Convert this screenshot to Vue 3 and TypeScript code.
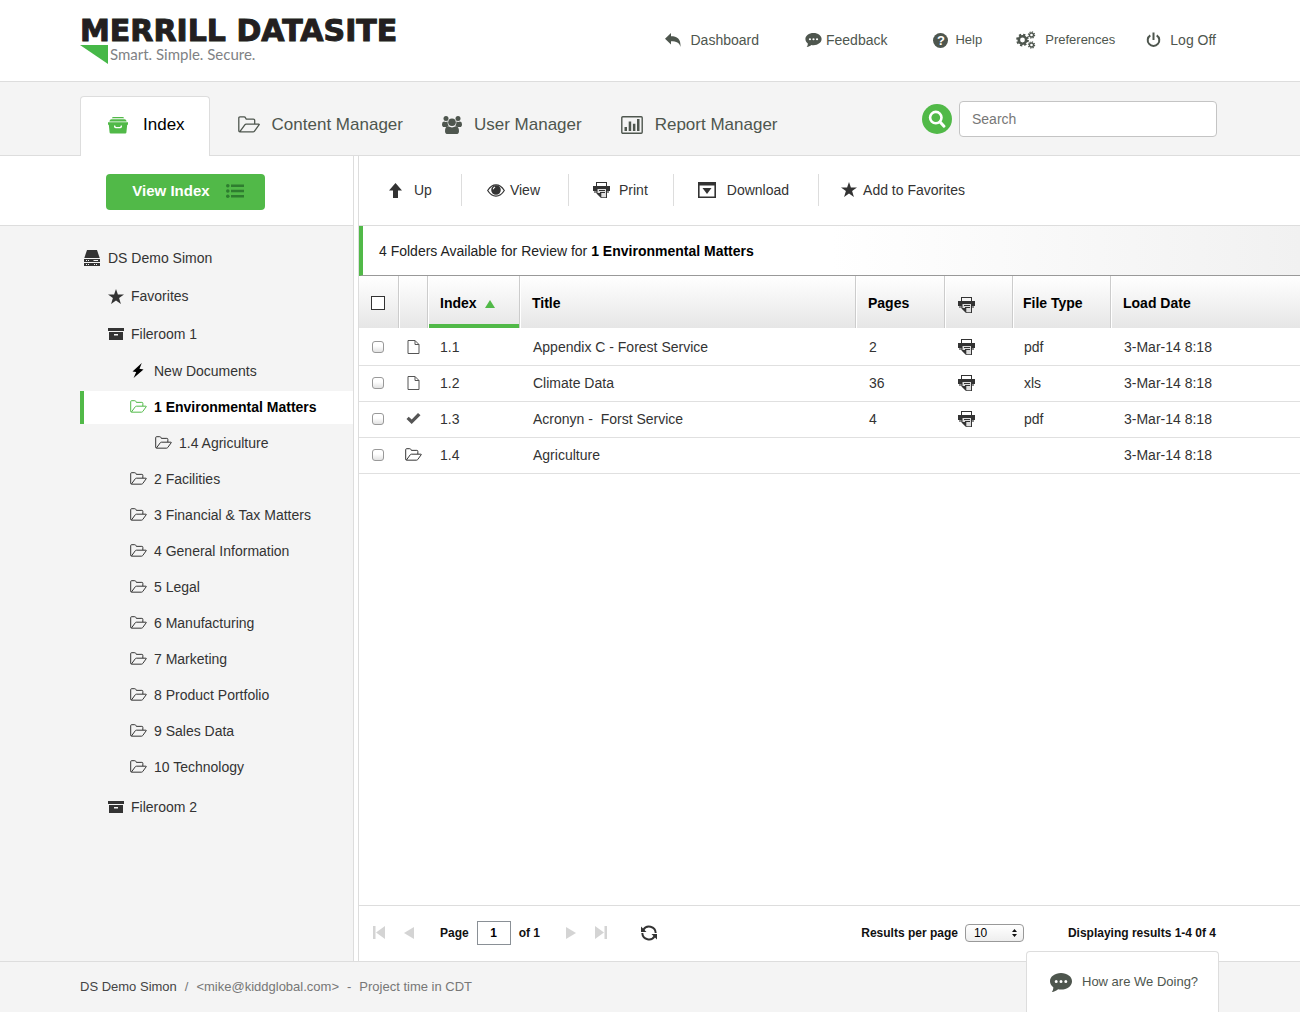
<script setup lang="ts">
import { ref } from 'vue'

interface TreeItem {
  label: string
  icon: string
  level: number
  active?: boolean
  last?: boolean
}

interface FileRow {
  icon: string
  index: string
  title: string
  pages: string
  type: string
  date: string
}

const tree: TreeItem[] = [
  { label: 'DS Demo Simon', icon: 'server', level: 0 },
  { label: 'Favorites', icon: 'star', level: 1 },
  { label: 'Fileroom 1', icon: 'box', level: 1 },
  { label: 'New Documents', icon: 'bolt', level: 2 },
  { label: '1 Environmental Matters', icon: 'folder', level: 2, active: true },
  { label: '1.4 Agriculture', icon: 'folder', level: 3 },
  { label: '2 Facilities', icon: 'folder', level: 2 },
  { label: '3 Financial & Tax Matters', icon: 'folder', level: 2 },
  { label: '4 General Information', icon: 'folder', level: 2 },
  { label: '5 Legal', icon: 'folder', level: 2 },
  { label: '6 Manufacturing', icon: 'folder', level: 2 },
  { label: '7 Marketing', icon: 'folder', level: 2 },
  { label: '8 Product Portfolio', icon: 'folder', level: 2 },
  { label: '9 Sales Data', icon: 'folder', level: 2 },
  { label: '10 Technology', icon: 'folder', level: 2, last: true },
  { label: 'Fileroom 2', icon: 'box', level: 1 },
]

const rows: FileRow[] = [
  { icon: 'page', index: '1.1', title: 'Appendix C - Forest Service', pages: '2', type: 'pdf', date: '3-Mar-14 8:18' },
  { icon: 'page', index: '1.2', title: 'Climate Data', pages: '36', type: 'xls', date: '3-Mar-14 8:18' },
  { icon: 'check', index: '1.3', title: 'Acronyn -  Forst Service', pages: '4', type: 'pdf', date: '3-Mar-14 8:18' },
  { icon: 'folder', index: '1.4', title: 'Agriculture', pages: '', type: '', date: '3-Mar-14 8:18' },
]

const page = ref('1')
const perPage = ref('10')
</script>

<template>
  <div class="app">
    <svg class="sprite" aria-hidden="true">
      <symbol id="reply" viewBox="0 0 16 14">
        <path d="M6 0v3.200c6 0 10 2.300 9.500 10.800C14.500 9.800 11.500 8.200 6 8.200V11.500L0 5.700Z" />
      </symbol>
      <symbol id="comment" viewBox="0 0 22 19">
        <path fill-rule="evenodd" d="M11 0C17.200 0 22 3.600 22 8.300S17.200 16.600 11 16.600c-1 0-2-.1-2.900-.3C6.500 17.800 4.300 18.800 1.800 19 2.800 17.800 3.300 16.400 3.300 14.300 1.200 12.800 0 10.700 0 8.300 0 3.600 4.800 0 11 0ZM6.200 7a1.500 1.500 0 1 0 0 3 1.500 1.500 0 0 0 0-3Zm4.800 0a1.500 1.500 0 1 0 0 3 1.500 1.500 0 0 0 0-3Zm4.800 0a1.500 1.500 0 1 0 0 3 1.500 1.500 0 0 0 0-3Z" />
      </symbol>
      <symbol id="gears" viewBox="0 0 20 18">
        <g fill="none" stroke="currentColor">
          <circle cx="6.500" cy="9" r="3.700" stroke-width="2.600" />
          <circle cx="6.500" cy="9" r="5.400" stroke-width="2" stroke-dasharray="2.240 2" />
          <circle cx="15.500" cy="4" r="2" stroke-width="1.300" />
          <circle cx="15.500" cy="4" r="3.100" stroke-width="1.200" stroke-dasharray="1.250 1.180" />
          <circle cx="15.500" cy="14" r="2" stroke-width="1.300" />
          <circle cx="15.500" cy="14" r="3.100" stroke-width="1.200" stroke-dasharray="1.250 1.180" />
        </g>
      </symbol>
      <symbol id="power" viewBox="0 0 15 16">
        <path fill="none" stroke="currentColor" stroke-width="2" d="M4.300 3.300a5.800 5.800 0 1 0 6.400 0M7.500 0.500v7.500" />
      </symbol>
      <symbol id="drawer" viewBox="0 0 20 17">
        <path d="M5.500 0h9q1.200 0 1.700 1.300H3.800Q4.300 0 5.500 0ZM3.500 2.300h13q1.700 0 2.200 2.200H1.300q.5-2.200 2.200-2.200Z" />
        <path fill-rule="evenodd" d="M0 5.300h20v2.500h-.8l-.8 7.700q-.1 1-1.200 1H2.800q-1.100 0-1.200-1L.8 7.800H0ZM6 8.500v.9q0 1.800 1.700 1.800h4.600q1.700 0 1.700-1.800v-.9h-1.300v.6q0 .8-.8.8H8.100q-.8 0-.8-.8v-.6Z" />
      </symbol>
      <symbol id="folder" viewBox="0 0 22 17">
        <path fill="none" stroke="currentColor" stroke-width="1.300" stroke-linejoin="round" d="M1.800 15.900Q.8 15.900.8 14.800V2.200Q.8.900 2 .9H6q1.200 0 1.600 1l.5 1.200h7.300q1.300 0 1.300 1.300V8M1.700 15.800 6.800 8.800Q7.300 8.100 8.200 8.100H20.600q1 0 .4.800L16.500 15.100q-.6.800-1.500.8H1.800" />
      </symbol>
      <symbol id="users" viewBox="0 0 20 18">
        <circle cx="4" cy="2.600" r="2.500" /><circle cx="16" cy="2.600" r="2.500" />
        <circle cx="10" cy="6.200" r="3.800" />
        <path d="M0 8.200q0-2.700 2-2.700 1.800.8 3.600 0-.2 2.500 1 4.200-1.400.3-2.200 1.300H2Q0 11 0 8.200ZM20 8.200q0-2.700-2-2.700-1.800.8-3.600 0 .2 2.500-1 4.200 1.400.3 2.200 1.300H18q2 0 2-2.800ZM3 15.200c0-3.300 1.200-4.900 3.300-4.900 2.200 1.500 5.200 1.500 7.400 0 2.100 0 3.300 1.600 3.300 4.900 0 2-1.200 2.800-2.800 2.800H5.800C4.200 18 3 17.200 3 15.200Z" />
      </symbol>
      <symbol id="report" viewBox="0 0 22 18">
        <rect x=".8" y=".8" width="20.400" height="16.400" rx="1" fill="none" stroke="currentColor" stroke-width="1.400" />
        <path d="M3.500 11h2.500v4H3.500zM7.700 5.500h2.500V15H7.700zM11.900 7.800h2.500V15h-2.500zM16 3h2.500v12H16z" />
      </symbol>
      <symbol id="search" viewBox="0 0 30 30">
        <circle cx="15" cy="15" r="15" fill="#51b948" />
        <g fill="none" stroke="#fff"><circle cx="13.800" cy="13.600" r="5.700" stroke-width="2.600" /><path stroke-width="3" stroke-linecap="round" d="m18.300 18.200 3.700 4" /></g>
      </symbol>
      <symbol id="list" viewBox="0 0 18 14">
        <circle cx="1.800" cy="1.800" r="1.800" /><circle cx="1.800" cy="7" r="1.800" /><circle cx="1.800" cy="12.200" r="1.800" />
        <path d="M5 .5h13v2.500H5zM5 5.700h13v2.500H5zM5 10.900h13v2.500H5z" />
      </symbol>
      <symbol id="up" viewBox="0 0 13 15"><path d="M6.500 0 13 7.500H9V15H4V7.500H0Z" /></symbol>
      <symbol id="eye" viewBox="0 0 18 13">
        <path fill="none" stroke="currentColor" stroke-width="1.200" d="M.7 6.500C3 2.800 5.800.8 9 .8s6 2 8.300 5.700C15 10.200 12.200 12.200 9 12.200S3 10.200.7 6.500Z" />
        <path fill-rule="evenodd" d="M9 1.200a4.800 4.800 0 1 1 0 9.600 4.800 4.800 0 0 1 0-9.600ZM7.900 2.500Q6 3 5.700 5.200l1.200.1q.3-1.500 1.400-1.800Z" />
      </symbol>
      <symbol id="print" viewBox="0 0 17 16">
        <path d="M3 0h11v4h-1V1H4v3H3ZM0 4h17v5H0Z" />
        <path fill="#888" d="M1 9h3v2H1zM13.500 9H16v2h-2.500z" />
        <path fill="#ddd" d="M4 7h10v8.200H8.500L4 11Z" />
        <path d="M3.500 7h1v4h3.800v4.200H13V7h1v9H8L3.500 11.500ZM6 8h6v1H6zM7 10h5v1H7z" />
      </symbol>
      <symbol id="download" viewBox="0 0 18 16">
        <path fill-rule="evenodd" d="M0 0h18v16H0ZM1.600 3.500v10.900h14.800V3.500Z" /><path d="M4.500 6h9L9 12Z" />
      </symbol>
      <symbol id="star" viewBox="0 0 16 15">
        <path d="m8 0 1.900 5.500H16l-4.900 3.600L12.900 15 8 11.400 3.100 15l1.800-5.900L0 5.500h6.100Z" />
      </symbol>
      <symbol id="server" viewBox="0 0 16 16">
        <path d="M3 0h10l2.700 8H.3Z" />
        <path fill-rule="evenodd" d="M0 9h16v3H0Zm2 1v1h1v-1Zm2 0v1h1v-1Zm5.500 0v1H14v-1ZM0 13h16v3H0Zm2 1v1h1v-1Zm2 0v1h1v-1Zm6 0v1h1v-1Zm2 0v1h1v-1Z" />
      </symbol>
      <symbol id="box" viewBox="0 0 16 12">
        <path fill-rule="evenodd" d="M0 0h16v3H0ZM1 4h14v8H1Zm5 2v1.500h4V6Z" />
      </symbol>
      <symbol id="bolt" viewBox="0 0 12 15"><path d="M9.800 0 .5 8.500l3.700.6L1.600 15 11.500 6.500l-4-.7Z" /></symbol>
      <symbol id="page" viewBox="0 0 12 14">
        <path fill="none" stroke="currentColor" d="M.5.500h7l4 4v9H.5ZM7.500.500v4h4" />
      </symbol>
      <symbol id="check" viewBox="0 0 14 11"><path d="M0 6 2.200 3.700l3 2.800L11.500 0 14 2.300 5.200 11Z" /></symbol>
      <symbol id="first" viewBox="0 0 12 13"><path d="M0 0h2.500v13H0zM12 0v13L3 6.500Z" /></symbol>
      <symbol id="prev" viewBox="0 0 10 12"><path d="M10 0v12L0 6Z" /></symbol>
      <symbol id="next" viewBox="0 0 10 12"><path d="M0 0v12l10-6Z" /></symbol>
      <symbol id="last" viewBox="0 0 12 13"><path d="M9.500 0H12v13H9.500zM0 0v13l9-6.500Z" /></symbol>
      <symbol id="refresh" viewBox="0 0 16 16">
        <path fill="none" stroke="currentColor" stroke-width="2" d="M2.200 5A6.700 6.700 0 0 1 14.700 8M13.800 11A6.700 6.700 0 0 1 1.300 8" />
        <path d="M0 1.500V7h5.500ZM16 14.500V9h-5.500Z" />
      </symbol>
      <symbol id="updown" viewBox="0 0 5 8"><path d="M2.500 0 5 3H0ZM2.500 8 0 5h5Z" /></symbol>
    </svg>

    <header class="header">
      <a class="logo" href="#">
        <span class="logo-name">MERRILL DATASITE</span>
        <span class="logo-tag">
          <svg width="28" height="20" viewBox="0 0 28 20"><path fill="#46b848" d="M0 1h28v19Z" /></svg>
          Smart. Simple. Secure.
        </span>
      </a>
      <nav class="nav">
        <a href="#" class="nav-dashboard"><svg width="16" height="14"><use href="#reply" /></svg>Dashboard</a>
        <a href="#" class="nav-feedback"><svg width="17" height="14"><use href="#comment" /></svg>Feedback</a>
        <a href="#" class="compact"><span class="help">?</span>Help</a>
        <a href="#" class="nav-prefs compact"><svg width="20" height="18"><use href="#gears" /></svg>Preferences</a>
        <a href="#" class="nav-log"><svg width="15" height="16"><use href="#power" /></svg>Log Off</a>
      </nav>
    </header>

    <div class="tabbar">
      <nav class="tabs">
        <a href="#" class="tab current"><svg width="20" height="17"><use href="#drawer" /></svg>Index</a>
        <a href="#" class="tab"><svg width="22" height="17"><use href="#folder" /></svg>Content Manager</a>
        <a href="#" class="tab"><svg width="20" height="18"><use href="#users" /></svg>User Manager</a>
        <a href="#" class="tab"><svg width="22" height="18"><use href="#report" /></svg>Report Manager</a>
      </nav>
      <form class="search" @submit.prevent>
        <button type="submit" aria-label="Search"><svg width="30" height="30"><use href="#search" /></svg></button>
        <input type="search" placeholder="Search" aria-label="Search documents" />
      </form>
    </div>

    <div class="body">
      <aside class="sidebar">
        <div class="sidebar-head">
          <button type="button" class="view-index">View Index<svg width="18" height="14"><use href="#list" /></svg></button>
        </div>
        <ul class="tree">
          <li v-for="item in tree" :key="item.label" :class="['level-' + item.level, { active: item.active, last: item.last }]">
            <a href="#"><span class="tree-icon"><svg :class="'i-' + item.icon"><use :href="'#' + item.icon" /></svg></span>{{ item.label }}</a>
          </li>
        </ul>
      </aside>

      <main class="main">
        <div class="toolbar">
          <button type="button" class="t-up"><svg width="13" height="15"><use href="#up" /></svg>Up</button>
          <button type="button" class="t-view"><svg width="18" height="13"><use href="#eye" /></svg>View</button>
          <button type="button" class="t-print"><svg width="17" height="16"><use href="#print" /></svg>Print</button>
          <button type="button" class="t-download"><svg width="18" height="16"><use href="#download" /></svg>Download</button>
          <button type="button" class="t-fav"><svg width="16" height="15"><use href="#star" /></svg>Add to Favorites</button>
        </div>
        <div class="banner"><p>4 Folders Available for Review for <strong>1 Environmental Matters</strong></p></div>

        <table class="files">
          <colgroup>
            <col class="c-check" /><col class="c-icon" /><col class="c-index" /><col />
            <col class="c-pages" /><col class="c-print" /><col class="c-type" /><col class="c-date" />
          </colgroup>
          <thead>
            <tr>
              <th><input type="checkbox" class="check-all" aria-label="Select all" /></th>
              <th></th>
              <th class="sorted">Index<svg width="10" height="8" viewBox="0 0 10 8"><path d="M5 0l5 8H0Z" /></svg></th>
              <th>Title</th>
              <th>Pages</th>
              <th><svg class="printer" width="17" height="16"><use href="#print" /></svg></th>
              <th>File Type</th>
              <th>Load Date</th>
            </tr>
          </thead>
          <tbody>
            <tr v-for="row in rows" :key="row.index">
              <td><input type="checkbox" :aria-label="'Select ' + row.index" /></td>
              <td><svg :class="'i-' + row.icon"><use :href="'#' + row.icon" /></svg></td>
              <td>{{ row.index }}</td>
              <td>{{ row.title }}</td>
              <td>{{ row.pages }}</td>
              <td><svg v-if="row.pages" class="printer" width="17" height="16"><use href="#print" /></svg></td>
              <td>{{ row.type }}</td>
              <td>{{ row.date }}</td>
            </tr>
          </tbody>
        </table>

        <div class="pager">
          <div class="pager-group">
            <button type="button" aria-label="First page" disabled><svg width="12" height="13"><use href="#first" /></svg></button>
            <button type="button" aria-label="Previous page" disabled><svg width="10" height="12"><use href="#prev" /></svg></button>
            <label class="page-field">Page <input v-model="page" type="text" /> of 1</label>
            <button type="button" aria-label="Next page" disabled><svg width="10" height="12"><use href="#next" /></svg></button>
            <button type="button" aria-label="Last page" disabled><svg width="12" height="13"><use href="#last" /></svg></button>
            <button type="button" class="refresh" aria-label="Refresh"><svg width="16" height="16"><use href="#refresh" /></svg></button>
          </div>
          <div class="pager-info">
            <label for="per-page">Results per page</label>
            <span class="select">
              <select id="per-page" v-model="perPage"><option>10</option><option>25</option><option>50</option></select>
              <svg width="5" height="8"><use href="#updown" /></svg>
            </span>
            <span class="showing">Displaying results 1-4 0f 4</span>
          </div>
        </div>
      </main>
    </div>

    <footer class="footer">
      <p><b>DS Demo Simon</b><span>/</span><span>&lt;mike@kiddglobal.com&gt;</span><span>-</span><span>Project time in CDT</span></p>
      <a href="#" class="doing"><svg width="22" height="19"><use href="#comment" /></svg>How are We Doing?</a>
    </footer>
  </div>
</template>

<style>
body {
  margin: 0;
  background: #fff;
}
</style>

<style scoped>
.app {
  display: flex;
  flex-direction: column;
  min-height: 100vh;
  font: 14px/18px "Liberation Sans", Arial, sans-serif;
  color: #333;
}
.app *,
.app *::before,
.app *::after {
  box-sizing: border-box;
}
.sprite {
  position: absolute;
  width: 0;
  height: 0;
}
svg {
  display: block;
  flex: none;
  fill: currentColor;
}
a {
  color: inherit;
  text-decoration: none;
}
button {
  display: flex;
  align-items: center;
  padding: 0;
  border: 0;
  background: none;
  font: inherit;
  color: inherit;
  cursor: pointer;
}
p {
  margin: 0;
}

/* header */
.header {
  display: flex;
  justify-content: space-between;
  align-items: center;
  height: 82px;
  padding: 0 84px 0 80px;
  border-bottom: 1px solid #ddd;
}
.logo-name {
  display: block;
  font: bold 30px/26px "DejaVu Sans", sans-serif;
  -webkit-text-stroke: 1px #231f20;
  color: #231f20;
  white-space: nowrap;
}
.logo-tag {
  display: flex;
  gap: 2px;
  font: 15px/20px Lato, sans-serif;
  color: #808285;
}
.nav {
  display: flex;
  align-items: center;
  padding-bottom: 1px;
  color: #4e564e;
}
.nav a {
  display: flex;
  align-items: center;
  gap: 7px;
}
.nav .nav-dashboard {
  gap: 10px;
}
.nav .nav-feedback {
  gap: 4px;
  margin: 0 46px;
}
.nav .compact {
  font-size: 13px;
}
.nav .nav-prefs {
  gap: 9px;
  margin: 0 31px 0 34px;
}
.nav .nav-log {
  gap: 9px;
}
.help {
  width: 15px;
  height: 15px;
  border-radius: 50%;
  background: #4e564e;
  color: #fff;
  font: bold 13px/15px "Liberation Sans", sans-serif;
  text-align: center;
}

/* tab bar */
.tabbar {
  display: flex;
  justify-content: space-between;
  height: 74px;
  padding: 0 83px 0 80px;
  background: #f4f4f4;
  border-bottom: 1px solid #ddd;
}
.tabs {
  display: flex;
  gap: 39px;
  padding-top: 14px;
  font-size: 17px;
  color: #4e564e;
}
.tab {
  display: flex;
  align-items: center;
  gap: 12px;
  height: 57px;
}
.tab.current {
  gap: 15px;
  height: 60px;
  margin-right: -11px;
  padding: 0 24px 3px 27px;
  border: 1px solid #ddd;
  border-bottom: 0;
  border-radius: 4px 4px 0 0;
  background: #fff;
  color: #000;
}
.tab.current svg {
  color: #51b948;
}
.search {
  display: flex;
  align-items: center;
  gap: 7px;
}
.search input {
  width: 258px;
  height: 36px;
  padding: 0 12px;
  border: 1px solid #c4c4c4;
  border-radius: 4px;
  background: #fff;
  font: inherit;
  color: #333;
  appearance: none;
}
.search input::placeholder {
  color: #777;
}

/* sidebar */
.body {
  display: flex;
  flex: 1;
}
.sidebar {
  display: flex;
  flex-direction: column;
  flex: none;
  width: 354px;
  border-right: 1px solid #ddd;
  background: #f4f4f4;
}
.sidebar-head {
  height: 70px;
  padding: 18px 0 0 106px;
  border-bottom: 1px solid #ddd;
  background: #fff;
}
.view-index {
  justify-content: center;
  gap: 16px;
  width: 159px;
  height: 36px;
  padding: 0 7px 2px 12px;
  border-radius: 4px;
  background: #51b948;
  font-size: 15px;
  font-weight: bold;
  color: #fff;
}
.view-index svg {
  color: #2e7d2f;
}
.tree {
  margin: 0;
  padding: 13px 0 13px 80px;
  list-style: none;
}
.tree a {
  display: flex;
  align-items: center;
  height: 36px;
}
.tree .level-0 a,
.tree .level-1 a {
  height: 38px;
}
.level-0 a {
  padding-left: 4px;
}
.level-1 a {
  padding-left: 28px;
}
.level-2 a {
  padding-left: 50px;
}
.level-3 a {
  padding-left: 75px;
}
.tree .last {
  padding-bottom: 3px;
}
.tree-icon {
  flex: none;
  width: 24px;
}
.level-1 .tree-icon {
  width: 23px;
}
.tree .level-2 svg,
.tree .level-3 svg {
  margin-bottom: 2px;
}
.tree .active a {
  height: 33px;
  margin: 2px 0 1px;
  padding: 0 0 1px 46px;
  border-left: 4px solid #51b948;
  background: #fff;
  font-weight: bold;
  color: #000;
}
.active .tree-icon {
  color: #51b948;
}
.i-server {
  width: 16px;
  height: 16px;
}
.i-star {
  width: 16px;
  height: 15px;
}
.i-box {
  width: 16px;
  height: 12px;
}
.i-bolt {
  width: 16px;
  height: 15px;
  color: #000;
}
.i-folder {
  width: 17px;
  height: 13px;
}
.i-page {
  width: 17px;
  height: 14px;
  color: #555;
}
.i-check {
  width: 17px;
  height: 11px;
  color: #555;
}

/* main */
.main {
  display: flex;
  flex-direction: column;
  flex: 1;
  min-width: 0;
  margin-left: 4px;
  border-left: 1px solid #ddd;
}
.toolbar {
  display: flex;
  align-items: flex-start;
  height: 70px;
  padding: 18px 0 0 6px;
  border-bottom: 1px solid #ddd;
}
.toolbar button {
  gap: 9px;
  height: 32px;
  padding: 0 25px 0 24px;
  white-space: nowrap;
}
.toolbar button + button {
  border-left: 1px solid #ddd;
}
.toolbar .t-up {
  gap: 12px;
  padding-right: 29px;
}
.toolbar .t-view {
  gap: 5px;
  padding-right: 28px;
  padding-left: 25px;
}
.toolbar .t-download {
  gap: 11px;
  padding-right: 29px;
}
.toolbar .t-fav {
  gap: 6px;
  padding-left: 22px;
}
.toolbar .t-fav svg {
  margin-bottom: 2px;
}
.banner {
  display: flex;
  align-items: center;
  height: 50px;
  padding-left: 16px;
  border-bottom: 1px solid #999;
  border-left: 4px solid #51b948;
  background: linear-gradient(to right, #fff 50%, #f1f1f1);
  color: #222;
}
.banner strong {
  color: #000;
}
.files {
  width: 100%;
  table-layout: fixed;
  border-collapse: separate;
  border-spacing: 0;
}
.c-check {
  width: 40px;
}
.c-icon {
  width: 29px;
}
.c-index {
  width: 92px;
}
.c-pages {
  width: 89px;
}
.c-print {
  width: 68px;
}
.c-type {
  width: 98px;
}
.c-date {
  width: 189px;
}
th {
  height: 52px;
  padding: 2px 0 0 12px;
  border-right: 1px solid #ccc;
  background: linear-gradient(#fff, #e6e6e6);
  text-align: left;
  color: #000;
}
th + th {
  box-shadow: inset 1px 0 #fff;
}
th:last-child {
  border-right: 0;
}
th.sorted {
  box-shadow: inset 1px 0 #fff, inset 0 -4px #51b948;
}
.sorted svg {
  display: inline-block;
  margin-left: 8px;
  color: #51b948;
}
td {
  height: 36px;
  padding: 0 0 2px 13px;
  border-bottom: 1px solid #e0e0e0;
  white-space: pre;
}
tbody tr:first-child td {
  height: 38px;
  padding-top: 2px;
}
td:nth-child(2) {
  padding-left: 6px;
}
td:nth-child(3) {
  padding-left: 12px;
}
th:nth-child(7) {
  padding-left: 10px;
}
td:nth-child(7) {
  padding-left: 11px;
}
.printer {
  color: #333;
}
th .printer {
  margin: 4px 0 0 1px;
}
.files input {
  display: block;
  width: 12px;
  height: 12px;
  margin: 0;
  border: 1px solid #999;
  border-radius: 3px;
  background: linear-gradient(#fff 40%, #e2e2e2);
  appearance: none;
}
.files .check-all {
  width: 14px;
  height: 14px;
  border-color: #333;
  border-radius: 0;
  background: #fff;
}

/* pager */
.pager {
  display: flex;
  justify-content: space-between;
  align-items: center;
  height: 56px;
  margin-top: auto;
  padding: 0 84px 2px 14px;
  border-top: 1px solid #ddd;
  font-size: 12px;
  font-weight: bold;
  color: #111;
}
.pager-group,
.pager-info,
.page-field {
  display: flex;
  align-items: center;
}
.pager-group {
  gap: 19px;
}
.pager-group button:disabled {
  color: #d4d4d4;
}
.page-field {
  gap: 8px;
  margin: 0 7px;
}
.page-field input {
  width: 34px;
  height: 24px;
  padding: 0;
  border: 1px solid #8a9096;
  font: inherit;
  text-align: center;
  color: #000;
}
.pager-group .refresh {
  margin-left: 15px;
  color: #333;
}
.pager-info {
  gap: 7px;
}
.select {
  position: relative;
}
.select select {
  display: block;
  width: 59px;
  height: 18px;
  padding: 0 8px;
  border: 1px solid #999;
  border-radius: 4px;
  background: linear-gradient(#fff, #eee);
  font: 12px/16px "Liberation Sans", Arial, sans-serif;
  color: #000;
  appearance: none;
}
.select svg {
  position: absolute;
  top: 5px;
  right: 7px;
  pointer-events: none;
}
.showing {
  margin-left: 37px;
}

/* footer */
.footer {
  position: relative;
  display: flex;
  align-items: center;
  height: 51px;
  padding-left: 80px;
  border-top: 1px solid #ddd;
  background: #f4f4f4;
  font-size: 13px;
  color: #777;
}
.footer p {
  display: flex;
  gap: 8px;
}
.footer b {
  font-weight: normal;
  color: #444;
}
.doing {
  position: absolute;
  right: 81px;
  bottom: 0;
  display: flex;
  align-items: center;
  gap: 10px;
  width: 193px;
  height: 61px;
  padding-left: 23px;
  border: 1px solid #ddd;
  border-bottom: 0;
  border-radius: 4px 4px 0 0;
  background: #fff;
  color: #4e564e;
}
</style>
